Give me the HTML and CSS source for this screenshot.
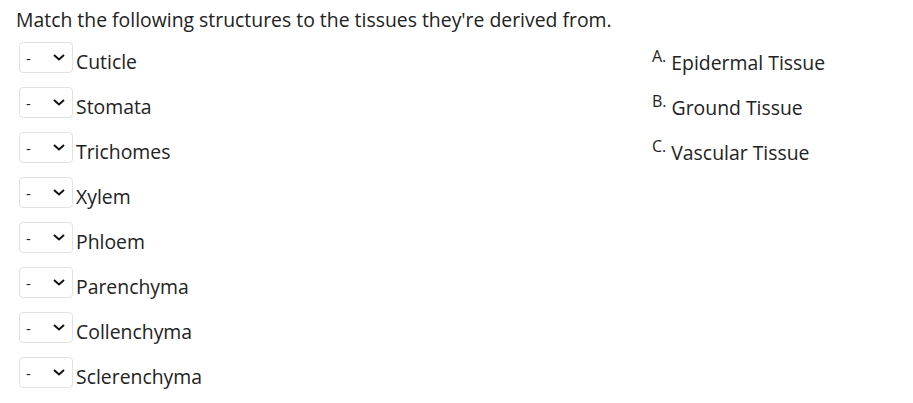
FILE: index.html
```html
<!DOCTYPE html>
<html lang="en">

<head>
    <meta charset="UTF-8">
    <meta name="viewport" content="width=device-width, initial-scale=1.0">

    <link rel="stylesheet" href="styles.css">
</head>

<body>
    <div class="question">
        <p class="prompt">Match the following structures to the tissues they're derived from.</p>

        <div class="match">
            <div class="items">
                <div class="item">
                    <span class="pick"><select><option>-</option><option>A</option><option>B</option><option>C</option></select><svg class="chev" viewBox="0 0 12 7"><path d="M1 1l5 4.5L11 1" /></svg></span>
                    <span class="term">Cuticle</span>
                </div>
                <div class="item">
                    <span class="pick"><select><option>-</option><option>A</option><option>B</option><option>C</option></select><svg class="chev" viewBox="0 0 12 7"><path d="M1 1l5 4.5L11 1" /></svg></span>
                    <span class="term">Stomata</span>
                </div>
                <div class="item">
                    <span class="pick"><select><option>-</option><option>A</option><option>B</option><option>C</option></select><svg class="chev" viewBox="0 0 12 7"><path d="M1 1l5 4.5L11 1" /></svg></span>
                    <span class="term">Trichomes</span>
                </div>
                <div class="item">
                    <span class="pick"><select><option>-</option><option>A</option><option>B</option><option>C</option></select><svg class="chev" viewBox="0 0 12 7"><path d="M1 1l5 4.5L11 1" /></svg></span>
                    <span class="term">Xylem</span>
                </div>
                <div class="item">
                    <span class="pick"><select><option>-</option><option>A</option><option>B</option><option>C</option></select><svg class="chev" viewBox="0 0 12 7"><path d="M1 1l5 4.5L11 1" /></svg></span>
                    <span class="term">Phloem</span>
                </div>
                <div class="item">
                    <span class="pick"><select><option>-</option><option>A</option><option>B</option><option>C</option></select><svg class="chev" viewBox="0 0 12 7"><path d="M1 1l5 4.5L11 1" /></svg></span>
                    <span class="term">Parenchyma</span>
                </div>
                <div class="item">
                    <span class="pick"><select><option>-</option><option>A</option><option>B</option><option>C</option></select><svg class="chev" viewBox="0 0 12 7"><path d="M1 1l5 4.5L11 1" /></svg></span>
                    <span class="term">Collenchyma</span>
                </div>
                <div class="item">
                    <span class="pick"><select><option>-</option><option>A</option><option>B</option><option>C</option></select><svg class="chev" viewBox="0 0 12 7"><path d="M1 1l5 4.5L11 1" /></svg></span>
                    <span class="term">Sclerenchyma</span>
                </div>
            </div>

            <div class="answers">
                <div class="answer"><span class="letter">A.</span>Epidermal Tissue</div>
                <div class="answer"><span class="letter">B.</span>Ground Tissue</div>
                <div class="answer"><span class="letter">C.</span>Vascular Tissue</div>
            </div>
        </div>
    </div>
</body>

</html>
```

FILE: styles.css
```css
body {
    margin: 0;
    background: #fff;
    color: #222;
    font-family: 'Open Sans', sans-serif;
    font-size: 19.4px;
}

.question {
    padding: 7px 16px;
}

.prompt {
    margin: 0;
    line-height: 25px;
}

.match {
    display: grid;
    grid-template-columns: 636px 1fr;
    margin-top: 10px;
}

.items {
    display: flex;
    flex-direction: column;
    gap: 14px;
}

.item {
    display: flex;
    align-items: flex-start;
    margin-left: 3px;

    .term {
        padding-top: 9px;
        margin-left: 3px;
        line-height: 22px;
    }
}

.pick {
    position: relative;
    display: block;
    flex-shrink: 0;

    select {
        appearance: none;
        display: block;
        box-sizing: border-box;
        width: 54px;
        height: 31px;
        margin: 0;
        padding: 0 0 0 6px;

        border: 1px solid #e2e2e2;
        border-radius: 4px;
        background: #fff;
        outline: none;

        color: #222;
        font-family: 'Open Sans', sans-serif;
        font-size: 15px;
    }

    .chev {
        position: absolute;
        left: 34px;
        top: 12px;
        width: 12px;
        height: 7px;
        pointer-events: none;

        path {
            fill: none;
            stroke: #111;
            stroke-width: 2;
        }
    }
}

.answers {
    display: flex;
    flex-direction: column;
    gap: 23px;
    padding-top: 10px;

    .answer {
        height: 22px;
        line-height: 22px;
    }

    .letter {
        font-size: 16px;
        line-height: 0;
        vertical-align: 8px;
        margin-right: 5px;
    }
}
```
